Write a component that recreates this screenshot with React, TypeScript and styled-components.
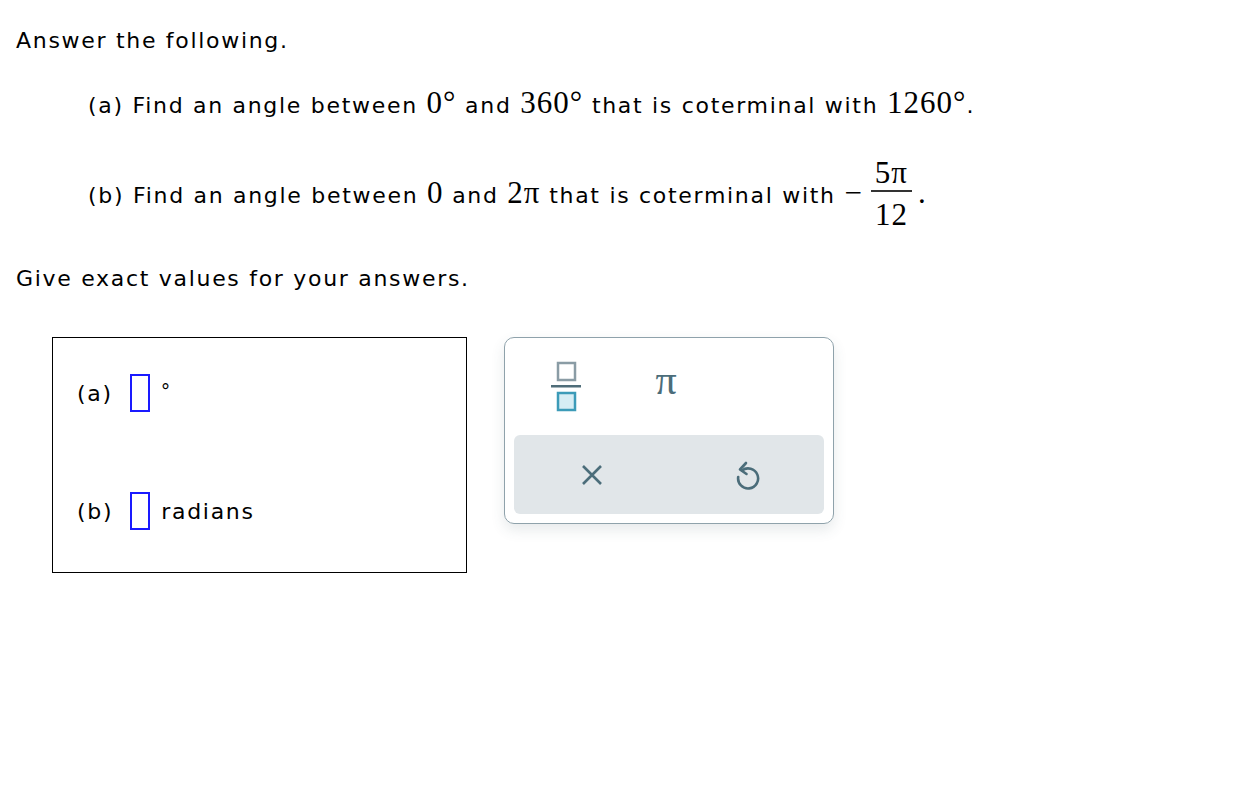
import styled, { createGlobalStyle } from "styled-components";

const GlobalStyle = createGlobalStyle`
  body {
    margin: 0;
    background: #fff;
    color: #000;
    font-family: "DejaVu Sans", Verdana, sans-serif;
  }
`;

const Page = styled.div`
  padding: 26px 16px 0 16px;
  font-size: 22px;
  letter-spacing: 1.7px;
`;

const Line = styled.p<{ indent?: number; gap?: number }>`
  margin: 0;
  margin-top: ${(p) => p.gap ?? 0}px;
  padding-left: ${(p) => p.indent ?? 0}px;
  line-height: 30px;
  white-space: nowrap;
`;

const M = styled.span`
  font-family: "Liberation Serif", "Times New Roman", serif;
  font-size: 31px;
  letter-spacing: 1px;
  line-height: 30px;
`;

const Frac = styled.span`
  display: inline-flex;
  flex-direction: column;
  align-items: center;
  vertical-align: 20px;
  font-family: "Liberation Serif", "Times New Roman", serif;
  font-size: 31px;
  letter-spacing: 1px;
  line-height: 26px;
  margin: 0 6px 0 8px;
  span:first-child {
    padding: 0 4px 4px;
    border-bottom: 2px solid #333;
  }
  span:last-child {
    padding-top: 10px;
  }
`;

const AnswerRow = styled.div`
  display: flex;
  align-items: flex-start;
  margin-top: 43px;
  padding-left: 36px;
  gap: 37px;
`;

const AnswerBox = styled.div`
  box-sizing: border-box;
  width: 415px;
  height: 236px;
  border: 1px solid #000;
  padding: 36px 0 0 24px;
  display: flex;
  flex-direction: column;
  gap: 80px;
`;

const AnswerLine = styled.div`
  display: flex;
  align-items: center;
  gap: 17px;
`;

const Slot = styled.span`
  box-sizing: border-box;
  width: 20px;
  height: 38px;
  border: 2px solid #1a1aff;
`;

const Degree = styled.span`
  font-size: 19px;
  line-height: 19px;
  letter-spacing: 0;
  margin-left: -6px;
  align-self: flex-start;
  margin-top: 8px;
`;

const Unit = styled.span`
  margin-left: -6px;
`;

const Keypad = styled.div`
  box-sizing: border-box;
  width: 330px;
  height: 187px;
  border: 1px solid #8fa2ab;
  border-radius: 10px;
  padding: 9px 9px 9px;
  box-shadow: 0 6px 14px rgba(60, 80, 90, 0.12);
  display: flex;
  flex-direction: column;
  gap: 9px;
`;

const KeyRow = styled.div`
  display: grid;
  grid-template-columns: repeat(3, 1fr);
  height: 79px;
`;

const ActionRow = styled.div`
  display: grid;
  grid-template-columns: repeat(2, 1fr);
  height: 79px;
  background: #e1e6e9;
  border-radius: 6px;
`;

const Key = styled.div`
  display: flex;
  align-items: center;
  justify-content: center;
  color: #4b6d7a;
`;

const PiKey = styled(Key)`
  font-family: "Liberation Serif", "Times New Roman", serif;
  font-size: 42px;
  letter-spacing: 0;
  padding-bottom: 14px;
  padding-right: 6px;
`;

const FractionIcon = () => (
  <svg width="32" height="52" viewBox="0 0 32 52">
    <rect x="8" y="2" width="17" height="17" fill="none" stroke="#8a9ca5" strokeWidth="2.5" />
    <rect x="1" y="24" width="30" height="2.5" fill="#4f6d79" />
    <rect x="8" y="32" width="17" height="17" fill="#d6edf4" stroke="#3c9bb8" strokeWidth="2.5" />
  </svg>
);

const CloseIcon = () => (
  <svg width="24" height="24" viewBox="0 0 24 24">
    <path d="M3 3 L21 21 M21 3 L3 21" stroke="#4b6d7a" strokeWidth="2.6" fill="none" />
  </svg>
);

const UndoIcon = () => (
  <svg width="28" height="30" viewBox="0 0 28 30">
    <path
      d="M9 10.5 A10 10 0 1 1 5.2 17"
      stroke="#4b6d7a"
      strokeWidth="2.6"
      fill="none"
      strokeLinecap="round"
    />
    <path
      d="M13 3 L7 9.5 L13.5 14"
      stroke="#4b6d7a"
      strokeWidth="2.6"
      fill="none"
      strokeLinecap="round"
      strokeLinejoin="round"
    />
  </svg>
);

const App = () => (
  <>
    <GlobalStyle />
    <Page>
      <Line>Answer the following.</Line>
      <Line indent={72} gap={32}>
        (a) Find an angle between <M>0°</M> and <M>360°</M> that is coterminal with <M>1260°</M>.
      </Line>
      <Line indent={72} gap={39}>
        (b) Find an angle between <M>0</M> and <M>2π</M> that is coterminal with <M>−</M>
        <Frac>
          <span>5π</span>
          <span>12</span>
        </Frac>
        <M>.</M>
      </Line>
      <Line gap={36}>Give exact values for your answers.</Line>
      <AnswerRow>
        <AnswerBox>
          <AnswerLine>
            (a) <Slot />
            <Degree>°</Degree>
          </AnswerLine>
          <AnswerLine>
            (b) <Slot />
            <Unit>radians</Unit>
          </AnswerLine>
        </AnswerBox>
        <Keypad>
          <KeyRow>
            <Key>
              <FractionIcon />
            </Key>
            <PiKey>π</PiKey>
            <Key />
          </KeyRow>
          <ActionRow>
            <Key>
              <CloseIcon />
            </Key>
            <Key>
              <UndoIcon />
            </Key>
          </ActionRow>
        </Keypad>
      </AnswerRow>
    </Page>
  </>
);

export default App;
